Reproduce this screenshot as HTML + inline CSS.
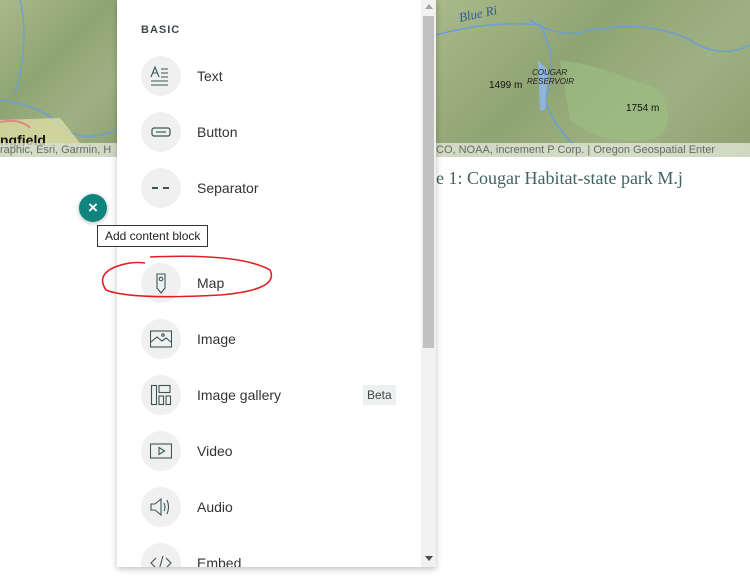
<!DOCTYPE html>
<html><head><style>
*{margin:0;padding:0;box-sizing:border-box}
body{width:750px;height:576px;overflow:hidden;background:#fff;position:relative;font-family:"Liberation Sans",sans-serif}
.map{position:absolute;top:0;height:157px;background:linear-gradient(135deg,#a9b98a,#8fa473 40%,#9fb183 70%,#8ea070)}
.attr{position:absolute;top:143px;height:14px;background:rgba(230,235,220,.75);font-size:11px;color:#6a6a6a;line-height:14px;white-space:nowrap;overflow:hidden}
.caption{position:absolute;left:436px;top:168px;font-family:"Liberation Serif",serif;font-size:18px;color:#3f6262}
.panel{position:absolute;left:117px;top:0;width:319px;height:567px;background:#fff;box-shadow:0 2px 6px rgba(0,0,0,.25);overflow:hidden}
.basic{position:absolute;left:24px;top:24px;font-size:11px;font-weight:bold;letter-spacing:1px;color:#3a4a4a}
.row{position:absolute;left:24px;height:40px;width:280px}
.ic{position:absolute;left:0;top:0;width:40px;height:40px;border-radius:50%;background:#f0f0f0}
.ic svg{position:absolute;left:9px;top:9px}
.lb{position:absolute;left:56px;top:12px;font-size:14px;color:#333}
.beta{position:absolute;left:222px;top:10px;background:#ecf0f0;font-size:12px;color:#444;padding:3px 4px}
.sb{position:absolute;left:421px;top:0;width:15px;height:567px;background:#f1f1f1}
.thumb{position:absolute;left:423px;top:16px;width:11px;height:332px;background:#c1c1c1}
.fab{position:absolute;left:79px;top:194px;width:28px;height:28px;border-radius:50%;background:#10857d;color:#fff;text-align:center;line-height:27px;font-size:17px;font-weight:bold;box-shadow:0 1px 4px rgba(0,0,0,.3)}
.tip{position:absolute;left:97px;top:225px;border:1px solid #333;background:#fff;font-size:12px;color:#222;padding:3px 7px}
</style></head><body>
<div class="map" style="left:0;width:117px"></div>
<div class="map" style="left:436px;width:314px"></div>
<svg style="position:absolute;left:0;top:0" width="750" height="157">
<path d="M0 100 Q40 105 60 125 T117 130" stroke="#6a9fd8" stroke-width="1.5" fill="none"/>
<path d="M20 0 Q30 40 15 95" stroke="#6a9fd8" stroke-width="1.2" fill="none"/>
<path d="M436 35 Q490 20 540 25 Q560 60 545 100 Q555 130 580 150" stroke="#6a9fd8" stroke-width="1.5" fill="none"/>
<path d="M530 20 Q560 40 590 30 Q650 20 690 40 Q720 60 750 45" stroke="#6a9fd8" stroke-width="1.5" fill="none"/>
<path d="M560 60 Q600 65 660 90 Q680 130 650 140 Q600 145 570 120Z" fill="#9cbf84" opacity=".6"/>
<path d="M538 60 L548 70 L545 110 L540 110Z" fill="#8fb4dd"/>
<path d="M0 120 L60 118 L80 143 L0 143Z" fill="#e6e3a8" opacity=".7"/>
<path d="M0 122 Q20 118 30 128" stroke="#d88" stroke-width="2" fill="none"/>
<text x="460" y="22" font-family="Liberation Serif" font-style="italic" font-size="13" fill="#2f5a9a" transform="rotate(-12 460 22)">Blue Ri</text>
<text x="489" y="88" font-size="10" fill="#111">1499 m</text>
<text x="532" y="75" font-size="8" fill="#222" font-style="italic">COUGAR</text>
<text x="527" y="84" font-size="8" fill="#222" font-style="italic">RESERVOIR</text>
<text x="626" y="111" font-size="10" fill="#111">1754 m</text>
<text x="0" y="145" font-size="14" font-weight="bold" fill="#111">ngfield</text>
</svg>
<div class="attr" style="left:0;width:117px">raphic, Esri, Garmin, H</div>
<div class="attr" style="left:436px;width:314px">CO, NOAA, increment P Corp. | Oregon Geospatial Enter</div>
<div class="caption">e 1: Cougar Habitat-state park M.j</div>
<div class="panel">
<div class="basic">BASIC</div>
<div class="row" style="top:56px"><div class="ic"><svg width="22" height="22" fill="none" stroke="#3a5656" stroke-width="1.1"><path d="M1 12 L5 2 L9 12 M3 8 H7 M11 4 H18 M11 8 H18 M11 12 H18 M1 16 H18 M1 20 H18"/></svg></div><div class="lb">Text</div></div>
<div class="row" style="top:112px"><div class="ic"><svg width="22" height="22" fill="none" stroke="#3a5656" stroke-width="1.2"><rect x="2" y="7" width="18" height="8" rx="2"/><path d="M6 11 H16"/></svg></div><div class="lb">Button</div></div>
<div class="row" style="top:168px"><div class="ic"><svg width="22" height="22" fill="none" stroke="#3a5656" stroke-width="2"><path d="M2 11 H8 M13 11 H19"/></svg></div><div class="lb">Separator</div></div>
<div class="row" style="top:263px"><div class="ic"><svg width="22" height="22" fill="none" stroke="#3a5656" stroke-width="1.1"><path d="M7 2 H15 V16 L11 21 L7 16Z"/><circle cx="11" cy="7" r="1.8"/></svg></div><div class="lb">Map</div></div>
<div class="row" style="top:319px"><div class="ic"><svg width="22" height="22" fill="none" stroke="#3a5656" stroke-width="1.1"><rect x="0.5" y="3" width="21" height="16"/><path d="M1 14 L7 9 L12 13 L16 10 L21 14"/><circle cx="13" cy="7" r="1.2"/></svg></div><div class="lb">Image</div></div>
<div class="row" style="top:375px"><div class="ic"><svg width="22" height="22" fill="none" stroke="#3a5656" stroke-width="1.1"><rect x="1.5" y="1.5" width="5" height="19"/><rect x="9" y="1.5" width="11" height="7"/><rect x="9" y="12" width="4.5" height="8.5"/><rect x="16" y="12" width="4.5" height="8.5"/></svg></div><div class="lb">Image gallery</div><div class="beta">Beta</div></div>
<div class="row" style="top:431px"><div class="ic"><svg width="22" height="22" fill="none" stroke="#3a5656" stroke-width="1.1"><rect x="0.5" y="4" width="21" height="14"/><path d="M9 7.5 L14.5 11 L9 14.5Z"/></svg></div><div class="lb">Video</div></div>
<div class="row" style="top:487px"><div class="ic"><svg width="22" height="22" fill="none" stroke="#3a5656" stroke-width="1.1"><path d="M1 8 H5 L11 3 V19 L5 14 H1Z M14 7 Q16 11 14 15 M17 4 Q20 11 17 18"/></svg></div><div class="lb">Audio</div></div>
<div class="row" style="top:543px"><div class="ic"><svg width="22" height="22" fill="none" stroke="#3a5656" stroke-width="1.1"><path d="M6 6 L1 11 L6 16 M16 6 L21 11 L16 16 M13 4 L9 18"/></svg></div><div class="lb">Embed</div></div>
</div>
<div class="sb"></div><div class="thumb"></div>
<div style="position:absolute;left:425px;top:4px;width:0;height:0;border-left:4px solid transparent;border-right:4px solid transparent;border-bottom:5px solid #a3a3a3"></div>
<div style="position:absolute;left:425px;top:556px;width:0;height:0;border-left:4px solid transparent;border-right:4px solid transparent;border-top:5px solid #505050"></div>
<svg style="position:absolute;left:100px;top:255px" width="180" height="50"><path d="M50 2 Q140 -2 170 15 Q180 35 120 40 Q30 45 6 35 Q-4 20 15 12 Q30 6 45 8" stroke="#e02020" stroke-width="1.6" fill="none"/></svg>
<div class="fab">×</div>
<div class="tip">Add content block</div>
</body></html>
